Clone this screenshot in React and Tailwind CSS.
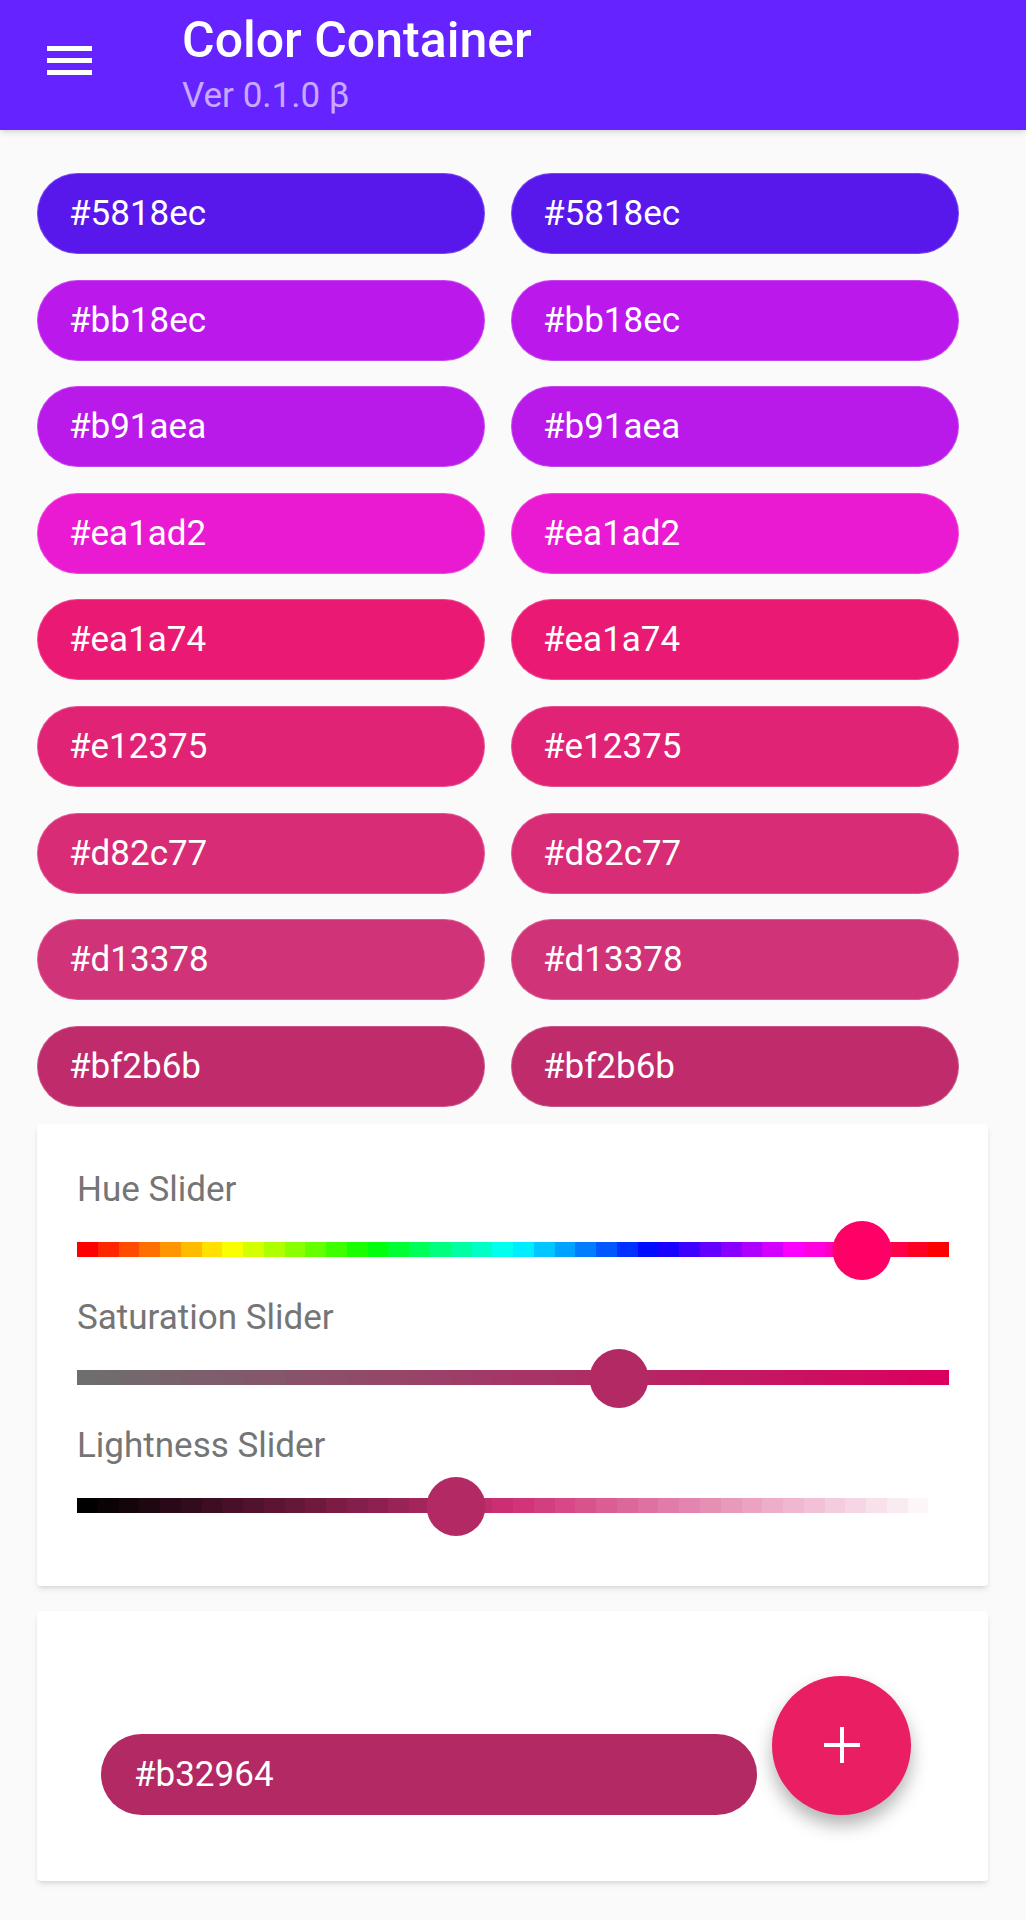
import React from 'react';

const colors = ['#5818ec', '#bb18ec', '#b91aea', '#ea1ad2', '#ea1a74', '#e12375', '#d82c77', '#d13378', '#bf2b6b'];

const range = (n) => Array.from({ length: n }, (_, i) => i);

const hueCells = range(42).map((i) => `hsl(${(i / 41) * 360}, 100%, 50%)`);
const satCells = range(42).map((i) => `hsl(334, ${(i / 41) * 100}%, 43%)`);
const lightCells = range(42).map((i) => `hsl(334, 63%, ${(i / 41) * 100}%)`);

const Slider = ({ label, cells, pos, thumb }) => (
    <div className="flex flex-col">
        <div className="text-[35px] leading-[40px] text-[#757575]">{label}</div>
        <div className="relative mt-[10px] h-[60px] flex items-center">
            <div className="flex w-full h-[15px]">
                {cells.map((c, i) => (
                    <div key={i} className="flex-1 h-full" style={{ background: c }} />
                ))}
            </div>
            <div
                className="absolute top-[1px] w-[59px] h-[59px] rounded-full -translate-x-1/2"
                style={{ left: `${pos * 100}%`, background: thumb }}
            />
        </div>
    </div>
);

const App = () => {
    return (
        <div className="w-[1026px] min-h-[1920px] bg-[#fafafa] font-['Roboto',sans-serif]">
            <header className="h-[130px] bg-[#6523ff] shadow-md flex relative z-10">
                <div className="pl-[47px] pt-[46px] w-[182px] shrink-0">
                    <div className="flex flex-col gap-[7px] w-[45px]">
                        <div className="h-[5px] bg-white" />
                        <div className="h-[5px] bg-white" />
                        <div className="h-[5px] bg-white" />
                    </div>
                </div>
                <div className="flex flex-col pt-[11px]">
                    <span className="text-[50px] leading-[58px] font-medium text-white">Color Container</span>
                    <span className="mt-[6px] text-[35px] leading-[42px] text-[#c8a9ff]">Ver 0.1.0 β</span>
                </div>
            </header>

            <div className="pl-[37px] pt-[43px]">
                <div className="grid grid-cols-[448px_448px] gap-x-[26px] gap-y-[25.6px]">
                    {colors.map((c) =>
                        [0, 1].map((k) => (
                            <div
                                key={c + k}
                                className="h-[81px] rounded-full flex items-center pl-[31px] text-white text-[35px] leading-none border border-white/20"
                                style={{ background: c }}
                            >
                                {c}
                            </div>
                        ))
                    )}
                </div>
            </div>

            <div className="ml-[37px] w-[951px] mt-[17px] bg-white rounded-[4px] shadow-md pl-[40px] pr-[39px] pt-[46px] pb-[50px] flex flex-col gap-[18px]">
                <Slider label="Hue Slider" cells={hueCells} pos={0.9} thumb="#ff0066" />
                <Slider label="Saturation Slider" cells={satCells} pos={0.622} thumb="#b32964" />
                <Slider label="Lightness Slider" cells={lightCells} pos={0.435} thumb="#b32964" />
            </div>

            <div className="ml-[37px] w-[951px] mt-[25px] bg-white rounded-[4px] shadow-md pl-[64px] pr-[77px] pt-[65px] pb-[66px] flex items-end gap-[15px]">
                <div className="flex-1 h-[81px] rounded-full bg-[#b32964] flex items-center pl-[33px] text-white text-[35px] leading-none">
                    #b32964
                </div>
                <button className="w-[139px] h-[139px] rounded-full bg-[#e91e63] shadow-[0_10px_18px_rgba(0,0,0,0.3)] flex items-center justify-center">
                    <svg width="38" height="38" viewBox="0 0 38 38">
                        <rect x="17" y="1" width="4" height="36" fill="white" />
                        <rect x="1" y="17" width="36" height="4" fill="white" />
                    </svg>
                </button>
            </div>
        </div>
    );
};

export default App;
